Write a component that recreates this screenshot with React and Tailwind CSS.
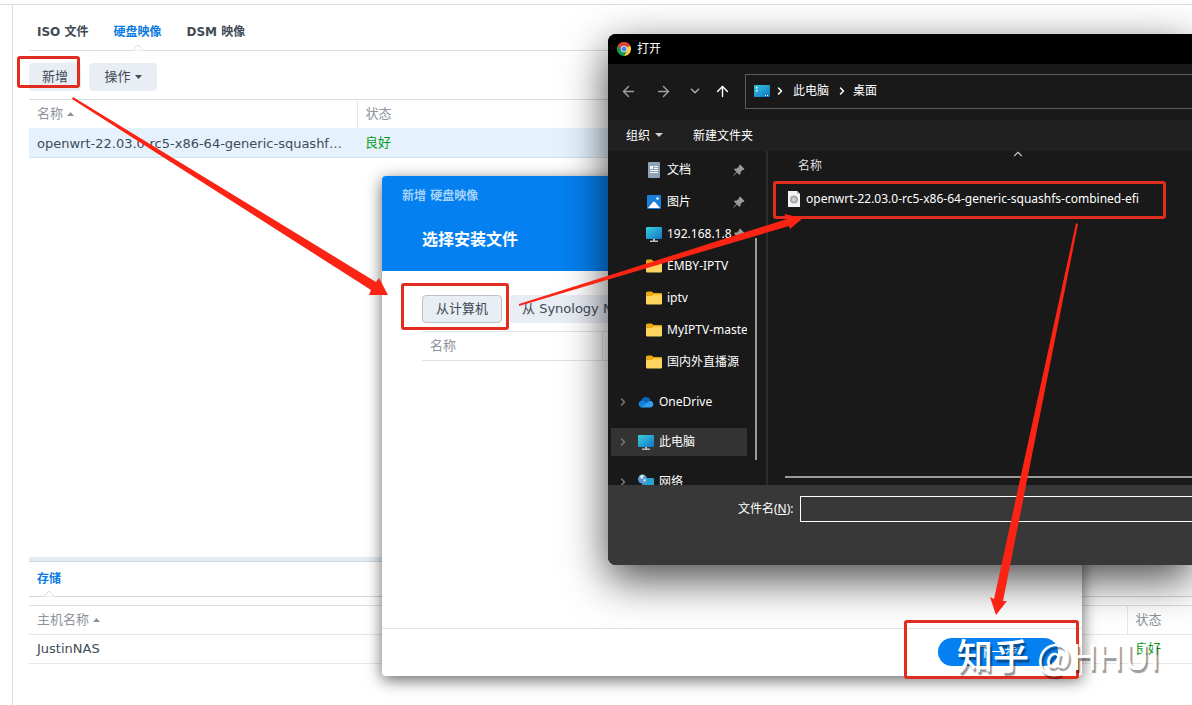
import { ArrowLeft, ArrowRight, ArrowUp, ChevronDown, ChevronRight, ChevronUp } from 'lucide-react';

const places = [
  { label: '文档', icon: DocIcon, pinned: true },
  { label: '图片', icon: PictureIcon, pinned: true },
  { label: '192.168.1.8', icon: MonitorIcon, pinned: true },
  { label: 'EMBY-IPTV', icon: FolderIcon },
  { label: 'iptv', icon: FolderIcon },
  { label: 'MyIPTV-master', icon: FolderIcon },
  { label: '国内外直播源', icon: FolderIcon },
];

const roots = [
  { label: 'OneDrive', icon: CloudIcon },
  { label: '此电脑', icon: MonitorIcon, active: true },
  { label: '网络', icon: NetworkIcon },
];

function ChromeIcon() {
  return (
    <svg className="w-[14px] h-[14px]" viewBox="0 0 48 48">
      <path fill="#db4437" d="M24 24 3.2 12A24 24 0 0 1 44.8 12Z" />
      <path fill="#0f9d58" d="M24 24 3.2 12A24 24 0 0 0 24 48L34 30Z" />
      <path fill="#ffcd40" d="M24 24 44.8 12A24 24 0 0 1 24 48L34 30Z" />
      <path fill="#db4437" d="M24 13H45.3A24 24 0 0 0 3.2 12L14 30Z" />
      <circle cx="24" cy="24" r="11" fill="#f1f1f1" />
      <circle cx="24" cy="24" r="8.6" fill="#4285f4" />
    </svg>
  );
}

function DesktopIcon() {
  return (
    <svg className="w-4 h-3" viewBox="0 0 16 12">
      <defs>
        <linearGradient id="desk" x1="0" y1="0" x2="1" y2="1">
          <stop offset="0" stopColor="#35c5e0" />
          <stop offset="1" stopColor="#1272c0" />
        </linearGradient>
      </defs>
      <rect width="16" height="12" rx="1" fill="url(#desk)" />
      <path fill="#fff" d="M2 2h1.5v1.5H2zM2 5h1.5v1.5H2zM11 10h1v1h-1zM13 10h1v1h-1z" />
    </svg>
  );
}

function DocIcon() {
  return (
    <svg className="w-4 h-4" viewBox="0 0 16 16">
      <rect x="2" width="12" height="16" rx="1" fill="#8fa3b8" />
      <path fill="#f4f8fc" d="M4 4h3v3H4zM8 4h4v1H8zM8 6h4v1H8zM4 8h8v1H4zM4 10h8v1H4z" />
    </svg>
  );
}

function PictureIcon() {
  return (
    <svg className="w-4 h-4" viewBox="0 0 16 16">
      <rect x="1" y="1" width="14" height="14" rx="1" fill="#1a7fd8" />
      <path fill="#fff" d="M2 14l5-6q1-1 2 0l5 6z" />
      <circle cx="11.5" cy="4.500" r="1.2" fill="#fff" />
    </svg>
  );
}

function MonitorIcon() {
  return (
    <svg className="w-4 h-4" viewBox="0 0 16 16">
      <defs>
        <linearGradient id="mon" x1="0" y1="0" x2="1" y2="1">
          <stop offset="0" stopColor="#3ad0dd" />
          <stop offset="1" stopColor="#1373c8" />
        </linearGradient>
      </defs>
      <rect y="1" width="16" height="12" rx="1" fill="url(#mon)" />
      <path fill="#b5bcc2" d="M7 13h2v1.500h3V16H4v-1.500h3z" />
    </svg>
  );
}

function FolderIcon() {
  return (
    <svg className="w-4 h-4" viewBox="0 0 16 16">
      <path fill="#e8a90c" d="M0 3q0-1.500 1.500-1.500h4L7.500 3H15q1 0 1 1v4H0z" />
      <path fill="#fdd560" d="M0 6.500q0-.5.5-.5h5.500l1.500-1.500H15.500q.5 0 .5.500V13q0 1.500-1.500 1.500h-13Q0 14.500 0 13z" />
    </svg>
  );
}

function CloudIcon() {
  return (
    <svg className="w-4 h-4" viewBox="0 0 16 16">
      <path fill="#0d63b8" d="M3 7a5 5 0 0 1 9.500-1L8 11z" />
      <path fill="#1580d8" d="M4 13.500a3.500 3.500 0 1 1 1.500-6.700L13 12z" />
      <path fill="#2fa0f0" d="M3 13.500L10 8a3 3 0 0 1 3-1 3.400 3.400 0 0 1 0 6.500z" />
    </svg>
  );
}

function NetworkIcon() {
  return (
    <svg className="w-4 h-4" viewBox="0 0 16 16">
      <rect x="4" y="4" width="12" height="10" rx="1" fill="#27a3d0" />
      <circle cx="4.500" cy="5" r="4.500" fill="#5d9bd0" />
      <path fill="#d8ecf8" d="M2 2q2-2 4-1L5 4 3 5zM5 6l3-1-1 3z" />
    </svg>
  );
}

function PinIcon() {
  return (
    <svg className="w-3 h-3" viewBox="0 0 12 12" fill="#9a9a9a">
      <path d="M7 .5 11.500 5l-1 1-1 0L7.500 8v2l-1 1L4 8.500.8 11.700.3 11.200 3.500 8 1 5.500l1-1h2L6 2.500v-1z" />
    </svg>
  );
}

function DiscFileIcon() {
  return (
    <svg className="w-3 h-4" viewBox="0 0 12 16">
      <path fill="#f3f3f3" d="M0 0h9l3 3v13H0z" />
      <path fill="#bdbdbd" d="M9 0l3 3H9z" />
      <circle cx="6" cy="8.500" r="4" fill="#a9a9a9" />
      <circle cx="6" cy="8.500" r="2" fill="#d2d2d2" />
    </svg>
  );
}

function Caret({ up, className = '' }) {
  return (
    <svg className={`inline-block h-1 ${className}`} viewBox="0 0 7 4" preserveAspectRatio="none" fill="currentColor">
      <path d={up ? 'M0 4 3.500 0 7 4z' : 'M0 0h7L3.500 4z'} />
    </svg>
  );
}

function Notch() {
  return (
    <svg className="absolute left-1/2 -ml-2 -bottom-px w-4 h-[7px]" viewBox="0 0 16 7">
      <path d="M1 6.500 2.500 6.500 8 1 13.500 6.500H15" fill="#fff" stroke="#d5dde3" />
    </svg>
  );
}

function Tab({ label, active }) {
  return (
    <button className={`relative h-full font-bold text-xs ${active ? 'text-[#0a7be0]' : 'text-[#414b55]'}`}>
      {label}
      {active && <Notch />}
    </button>
  );
}

function ImageManager() {
  return (
    <main className="min-h-screen flex flex-col pt-1 text-[13px] text-[#414b55]">
      <div className="flex-1 flex flex-col border-t border-[#d5e0e6]">
        <div className="flex-1 flex flex-col ml-3 pl-4 border-l border-[#d5e0e6]">
          <nav className="flex gap-[25px] h-[46px] px-2 pt-2 border-b border-[#d5e0e6]">
            <Tab label="ISO 文件" />
            <Tab label="硬盘映像" active />
            <Tab label="DSM 映像" />
          </nav>
          <div className="flex gap-2 pt-3 pb-2">
            <button className="h-7 w-[52px] rounded-sm bg-[#e9edf4]">新增</button>
            <button className="h-7 w-[68px] rounded-sm bg-[#e9edf4]">
              操作<Caret className="w-[7px] ml-1 mb-0.5" />
            </button>
          </div>
          <table className="w-full table-fixed text-left border-t border-[#d5e0e6]">
            <thead>
              <tr className="h-7 text-[#8d949b]">
                <th className="w-[328px] px-2 font-normal border-r border-[#e3e8ec]">
                  名称<Caret up className="w-[7px] ml-1 mb-0.5" />
                </th>
                <th className="px-2 font-normal">状态</th>
              </tr>
            </thead>
            <tbody>
              <tr className="h-[30px] bg-[#e5f2fd] border-b border-[#d5e0e6]">
                <td className="pl-2 pr-3 pt-0.5 truncate">openwrt-22.03.0-rc5-x86-64-generic-squashfs-combined-efi</td>
                <td className="px-2 text-[#0a9a1c]">良好</td>
              </tr>
            </tbody>
          </table>

          <section className="mt-auto mb-[41px] border-t-4 border-[#e4ebf2]">
            <div className="flex h-9 px-2 border-y border-[#cfd8de]">
              <Tab label="存储" active />
            </div>
            <table className="w-full mt-2 text-left border-t border-[#d5e0e6]">
              <thead>
                <tr className="h-[29px] text-[#8d949b] border-b border-[#e3e8ec]">
                  <th className="px-2 font-normal">
                    主机名称<Caret up className="w-[7px] ml-1 mb-0.5" />
                  </th>
                  <th className="w-[65px] px-2 font-normal border-l border-[#e3e8ec]">状态</th>
                </tr>
              </thead>
              <tbody>
                <tr className="h-[29px] border-b border-[#e3e8ec]">
                  <td className="px-2">JustinNAS</td>
                  <td className="px-2 text-[#0a9a1c]">良好</td>
                </tr>
              </tbody>
            </table>
          </section>
        </div>
      </div>
    </main>
  );
}

function AddImageDialog() {
  return (
    <div
      role="dialog"
      aria-label="新增 硬盘映像"
      className="absolute left-[382px] top-[176px] w-[700px] h-[500px] flex flex-col rounded-sm overflow-hidden bg-white text-[13px] text-[#414b55] shadow-[0_4px_16px_rgba(0,0,0,0.6)]"
    >
      <header className="h-[95px] px-5 pt-3 bg-[#0480f0]">
        <p className="text-xs leading-4 font-bold text-[#a5d3fb]">新增 硬盘映像</p>
        <h2 className="pl-5 mt-6 text-base leading-6 font-bold text-white">选择安装文件</h2>
      </header>
      <div className="flex-1 px-10 pt-6">
        <div className="flex gap-2">
          <button className="h-7 w-20 rounded-sm border border-[#b9c2cc] bg-[#e9edf4]">从计算机</button>
          <button className="h-7 px-3 rounded-sm bg-[#e9edf4]">从 Synology NAS</button>
        </div>
        <table className="w-full mt-2 text-left">
          <thead>
            <tr className="h-[29px] text-[#8d949b] border-y border-[#dfe4e8]">
              <th className="w-[180px] px-2 font-normal border-r border-[#e3e8ec]">名称</th>
              <th />
            </tr>
          </thead>
        </table>
      </div>
      <footer className="flex justify-end h-12 px-6 py-[9px] border-t border-[#dfe4e8]">
        <button className="h-7 w-[120px] rounded-full bg-[#0480f0] text-white">下一步</button>
      </footer>
    </div>
  );
}

function OpenDialog() {
  return (
    <div
      role="dialog"
      aria-label="打开"
      className="absolute left-[608px] right-0 top-[34px] h-[531px] flex flex-col rounded-l-lg bg-[#191919] text-xs text-white font-['Noto_Sans','Noto_Sans_CJK_SC',sans-serif] shadow-[0_14px_44px_rgba(0,0,0,0.72)]"
    >
      <header className="flex items-center gap-1.5 h-[30px] px-[9px] rounded-tl-lg bg-black">
        <ChromeIcon />
        打开
      </header>
      <div className="flex items-center h-14 pl-3 pb-0.5">
        <button aria-label="后退" className="text-[#a0a0a0]"><ArrowLeft size={17} strokeWidth={2} /></button>
        <button aria-label="前进" className="ml-[18px] text-[#a0a0a0]"><ArrowRight size={17} strokeWidth={2} /></button>
        <button aria-label="最近" className="ml-4 text-[#a0a0a0]"><ChevronDown size={14} strokeWidth={3} /></button>
        <button aria-label="向上" className="ml-3"><ArrowUp size={17} strokeWidth={2} /></button>
        <div className="flex-1 flex items-center h-[35px] ml-3.5 pl-2 border border-r-0 border-[#5a5a5a]">
          <DesktopIcon />
          <ChevronRight size={12} strokeWidth={3} className="mx-1" />
          <button className="mx-[3px]">此电脑</button>
          <ChevronRight size={12} strokeWidth={3} className="mx-1" />
          <button className="mx-px">桌面</button>
        </div>
      </div>
      <div className="flex items-center gap-[30px] h-[31px] px-[18px] bg-[#202020]">
        <button>组织<Caret className="w-2 ml-[5px] mb-0.5 text-[#d0d0d0]" /></button>
        <button>新建文件夹</button>
      </div>
      <div className="flex-1 min-h-0 flex">
        <aside className="relative w-[160px] shrink-0 overflow-hidden border-r-2 border-[#2b2b2b]">
          <ul className="w-[139px] pt-[3px]">
            {places.map(({ label, icon: Icon, pinned }) => (
              <li key={label} className="flex items-center h-8 pl-[38px]">
                <Icon />
                <span className="flex-1 ml-[5px] overflow-hidden whitespace-nowrap">{label}</span>
                {pinned && <span className="mr-0.5"><PinIcon /></span>}
              </li>
            ))}
          </ul>
          <ul className="w-[139px] mt-2.5 pl-[3px] flex flex-col gap-3">
            {roots.map(({ label, icon: Icon, active }) => (
              <li key={label} className={`flex items-center h-7 pl-1.5 ${active ? 'bg-[#333333]' : ''}`}>
                <ChevronRight size={12} strokeWidth={3} className="mr-[9px] text-[#7a7a7a]" />
                <Icon />
                <span className="ml-[5px]">{label}</span>
              </li>
            ))}
          </ul>
          <span className="absolute left-[147px] top-[87px] w-0.5 h-[222px] bg-[#9a9a9a]" />
        </aside>
        <div className="relative flex-1 min-w-0 flex flex-col pl-[17px]">
          <ChevronUp size={14} className="absolute left-[243px] -top-1 text-[#c0c0c0]" />
          <div className="h-8 pl-[13px] leading-[30px] text-[#dedede]">名称</div>
          <div className="flex items-center h-8 pl-[3px] gap-1.5">
            <DiscFileIcon />
            <span className="whitespace-nowrap">openwrt-22.03.0-rc5-x86-64-generic-squashfs-combined-efi</span>
          </div>
          <div className="h-0.5 mt-auto mb-[7px] bg-[#9a9a9a]" />
        </div>
      </div>
      <footer className="flex items-start h-20 pl-[130px] pt-[11px] rounded-bl-lg bg-[#383838]">
        <label htmlFor="filename" className="leading-[26px] mr-1.5 whitespace-nowrap">
          文件名(<u>N</u>):
        </label>
        <input id="filename" className="flex-1 min-w-0 h-[26px] px-2 bg-[#383838] border border-r-0 border-white outline-none" />
      </footer>
    </div>
  );
}

function Annotations() {
  return (
    <div className="absolute inset-0 pointer-events-none">
      <div className="absolute left-[17px] top-[56px] w-[63px] h-[32px] rounded-[3px] border-3 border-[#e02d20]" />
      <div className="absolute left-[401px] top-[283px] w-[108px] h-[47px] rounded-[3px] border-3 border-[#e02d20]" />
      <div className="absolute left-[773px] top-[181px] w-[393px] h-[38px] rounded-[3px] border-3 border-[#e02d20]" />
      <div className="absolute left-[904px] top-[620px] w-[175px] h-[59px] rounded-[3px] border-3 border-[#e02d20]" />
      <svg className="absolute left-0 top-0 w-[1192px] h-[705px]" viewBox="0 0 1192 705" fill="#fb2414">
        <path d="M73 97 L376 282 L379 278 L388 295 L369 295 L371 290 L72 99 Z" />
        <path d="M519 304 L787 219 L784 214 L803 218 L790 229 L789 226 L519 306 Z" />
        <path d="M1076 223 L994 599 L990 597 L996 615 L1007 601 L1003 601 L1078 224 Z" />
      </svg>
    </div>
  );
}

export default function App() {
  return (
    <div className="relative min-h-screen overflow-hidden bg-white font-['DejaVu_Sans','Noto_Sans_CJK_SC',sans-serif]">
      <ImageManager />
      <AddImageDialog />
      <OpenDialog />
      <Annotations />
      <p className="absolute left-[957px] top-[634px] whitespace-nowrap text-4xl leading-10 text-white font-['Noto_Sans_CJK_SC',sans-serif] [text-shadow:2px_3px_1px_rgba(0,0,0,0.4)]">
        <span className="font-medium">知乎</span> @HHUI
      </p>
    </div>
  );
}
